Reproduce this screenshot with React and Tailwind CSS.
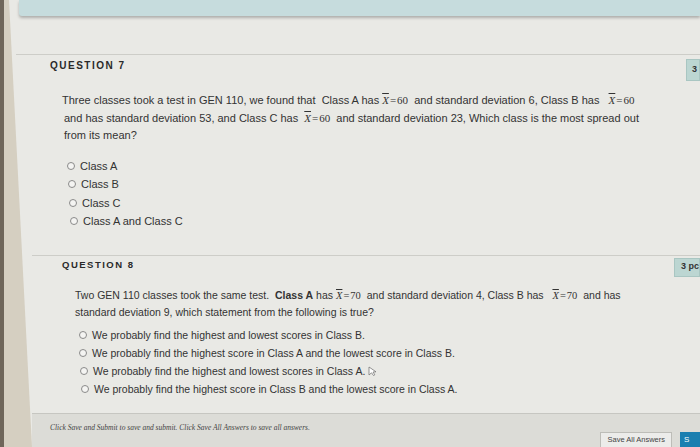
import React from "react";

const sans = { fontFamily: '"Liberation Sans", Arial, sans-serif' };

function Xbar({ v }) {
  return (
    <span className="mx-[3px] font-['Liberation_Serif',serif] text-[#333]">
      <span className="italic overline">X</span>
      <span className="mx-[1px]">=</span>
      {v}
    </span>
  );
}

function Radio({ children, className = "" }) {
  return (
    <div className={`flex items-center gap-[5px] ${className}`}>
      <span className="w-[8px] h-[8px] rounded-full border border-[#8a8a8a] bg-[#f4f4f2] shrink-0" />
      <span>{children}</span>
    </div>
  );
}

function Cursor() {
  return (
    <svg width="9" height="10" viewBox="0 0 9 10" className="inline-block ml-[3px] -mt-[2px]">
      <path d="M1 1 L1 9 L3.5 6.8 L5.5 9.5 L6.8 8.8 L5 6 L8 5.8 Z" fill="#fff" stroke="#777" strokeWidth="0.8" />
    </svg>
  );
}

export default function App() {
  return (
    <div
      className="relative w-[700px] h-[447px] overflow-hidden bg-[#e9e9e5] text-[#333] flex flex-col"
      style={sans}
    >
      {/* top bar */}
      <div className="ml-[19px] h-[16px] bg-[#c6dcdd] rounded-bl-[3px] shadow-[0_2px_3px_rgba(0,0,0,0.25)] shrink-0" />

      {/* question 7 */}
      <div className="mt-[38px] ml-[16px] border-t border-[#cdcdc8] flex flex-col">
        <div className="flex items-start justify-between h-[24px]">
          <span className="ml-[34px] mt-[3px] text-[10px] font-bold tracking-[1.5px] text-[#2a2a2a]">QUESTION 7</span>
          <span className="mt-[4px] w-[14px] h-[22px] bg-[#bcd6d2] border border-[#a9c6c2] flex items-center pl-[5px] text-[9px] font-bold">
            3
          </span>
        </div>
        <div className="ml-[46px] mt-[13px] text-[11px] leading-[17.5px] w-[600px]">
          <div>
            Three classes took a test in GEN 110, we found that&nbsp; Class A has
            <Xbar v="60" /> and standard deviation 6, Class B has&nbsp;&nbsp;
            <Xbar v="60" />
          </div>
          <div className="ml-[2px]">
            and has standard deviation 53, and Class C has&nbsp;
            <Xbar v="60" /> and standard deviation 23, Which class is the most spread out
          </div>
          <div className="ml-[2px]">from its mean?</div>
        </div>
        <div className="ml-[51px] mt-[12px] text-[11px] leading-[18.5px] flex flex-col">
          <Radio>Class A</Radio>
          <Radio className="ml-[1px]">Class B</Radio>
          <Radio className="ml-[2px]">Class C</Radio>
          <Radio className="ml-[3px]">Class A and Class C</Radio>
        </div>
      </div>

      {/* question 8 */}
      <div className="mt-[24px] ml-[32px] border-t border-[#cdcdc8] flex flex-col">
        <div className="flex items-start justify-between h-[22px]">
          <span className="ml-[30px] mt-[2px] text-[9.5px] font-bold tracking-[1.5px] text-[#2a2a2a]">QUESTION 8</span>
          <span className="mt-[2px] w-[26px] h-[19px] bg-[#bcd6d2] border border-[#a9c6c2] flex items-center pl-[6px] text-[9px] font-bold whitespace-nowrap overflow-hidden">
            3 pc
          </span>
        </div>
        <div className="ml-[43px] mt-[9px] text-[10.5px] leading-[17px]">
          <div>
            Two GEN 110 classes took the same test.&nbsp; <b>Class A</b> has
            <Xbar v="70" /> and standard deviation 4, Class B has&nbsp;&nbsp;
            <Xbar v="70" /> and has
          </div>
          <div>standard deviation 9, which statement from the following is true?</div>
        </div>
        <div className="ml-[47px] mt-[5px] text-[10.5px] leading-[18px] flex flex-col">
          <Radio>We probably find the highest and lowest scores in Class B.</Radio>
          <Radio>We probably find the highest score in Class A and the lowest score in Class B.</Radio>
          <Radio className="ml-[1px]">
            We probably find the highest and lowest scores in Class A.
            <Cursor />
          </Radio>
          <Radio className="ml-[2px]">We probably find the highest score in Class B and the lowest score in Class A.</Radio>
        </div>
      </div>

      {/* footer */}
      <div className="mt-auto ml-[32px] h-[34px] bg-[#dcdcd7] border-t border-[#c6c6c1] flex items-start justify-between">
        <span className="ml-[18px] mt-[8px] text-[7.5px] italic text-[#444] font-['Liberation_Serif',serif]">
          Click Save and Submit to save and submit. Click Save All Answers to save all answers.
        </span>
        <div className="flex items-end self-end gap-[8px]">
          <span className="h-[15px] px-[6px] bg-[#ececea] border border-[#bdbdb8] border-b-0 text-[7.5px] text-[#444] flex items-center">
            Save All Answers
          </span>
          <span className="w-[20px] h-[15px] bg-[#1b7fb0] text-white text-[8px] pl-[4px] flex items-center">S</span>
        </div>
      </div>

      {/* photo bezel at the left edge */}
      <svg className="absolute left-0 top-0" width="34" height="447" viewBox="0 0 34 447">
        <polygon points="3,0 9,0 32,447 3,447" fill="#d5cfc1" />
        <rect x="0" y="0" width="4" height="447" fill="#6f665a" />
      </svg>
    </div>
  );
}
